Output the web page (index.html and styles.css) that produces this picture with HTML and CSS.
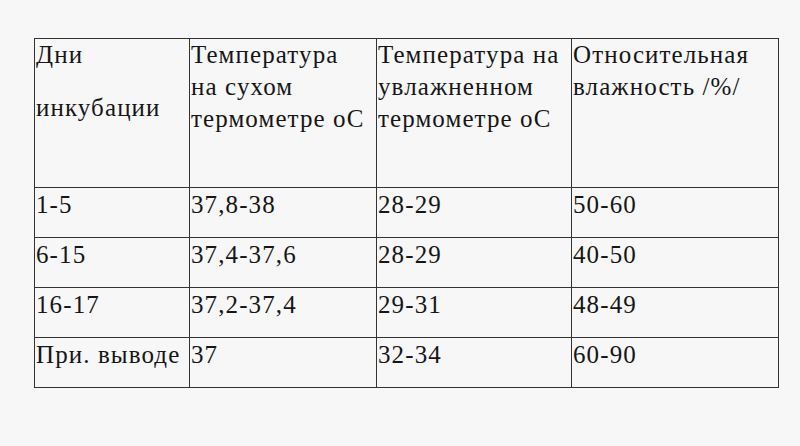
FILE: index.html
```html
<!DOCTYPE html>
<html>
<head>
<meta charset="utf-8">
<title>Инкубация</title>
<link rel="stylesheet" href="styles.css">
</head>
<body>
<div class="page">
<table class="grid">
  <colgroup>
    <col class="c1"><col class="c2"><col class="c3"><col class="c4">
  </colgroup>
  <tr class="head">
    <td class="cell"><div>Дни</div><div class="gap">инкубации</div></td>
    <td class="cell">Температура на&nbsp;сухом термометре оС</td>
    <td class="cell">Температура на увлажненном термометре оС</td>
    <td class="cell">Относительная влажность /%/</td>
  </tr>
  <tr class="row"><td class="cell">1-5</td><td class="cell">37,8-38</td><td class="cell">28-29</td><td class="cell">50-60</td></tr>
  <tr class="row"><td class="cell">6-15</td><td class="cell">37,4-37,6</td><td class="cell">28-29</td><td class="cell">40-50</td></tr>
  <tr class="row"><td class="cell">16-17</td><td class="cell">37,2-37,4</td><td class="cell">29-31</td><td class="cell">48-49</td></tr>
  <tr class="row"><td class="cell">При. выводе</td><td class="cell">37</td><td class="cell">32-34</td><td class="cell">60-90</td></tr>
</table>
</div>
</body>
</html>
```

FILE: styles.css
```css
html, body {
  margin: 0;
  padding: 0;
  background: #fdfdfd;
}
.page {
  width: 800px;
  height: 446px;
  box-sizing: border-box;
  padding: 38px 0 0 34px;
  background: #f7f7f7;
}
.grid {
  border-collapse: collapse;
  table-layout: fixed;
  width: 744px;
}
.c1 { width: 155px; }
.c2 { width: 187px; }
.c3 { width: 195px; }
.c4 { width: 207px; }
.cell {
  font-family: "Liberation Serif", "Times New Roman", serif;
  font-size: 25px;
  letter-spacing: 1.1px;
  line-height: 32px;
  color: #161616;
  border: 1.5px solid #333;
  vertical-align: top;
  padding: 0 0 0 1px;
  overflow: hidden;
  white-space: normal;
}
.head .cell { height: 148px; }
.row .cell { height: 48px; padding-top: 1px; }
.gap { margin-top: 21px; }
```
